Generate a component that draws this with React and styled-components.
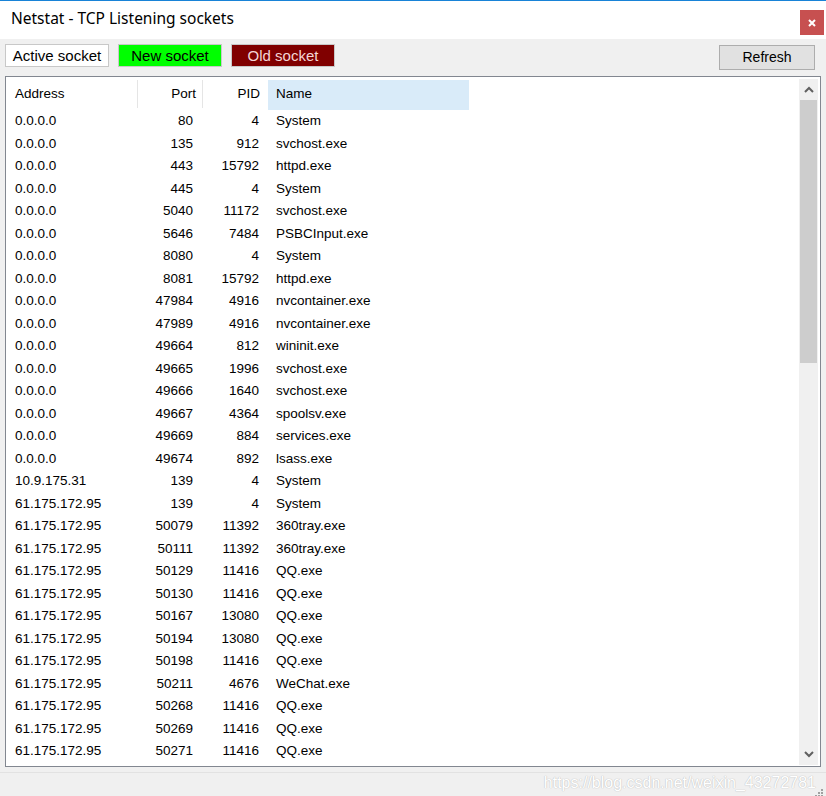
import React from "react";
import styled, { createGlobalStyle } from "styled-components";

const rows = [
  ["0.0.0.0", "80", "4", "System"],
  ["0.0.0.0", "135", "912", "svchost.exe"],
  ["0.0.0.0", "443", "15792", "httpd.exe"],
  ["0.0.0.0", "445", "4", "System"],
  ["0.0.0.0", "5040", "11172", "svchost.exe"],
  ["0.0.0.0", "5646", "7484", "PSBCInput.exe"],
  ["0.0.0.0", "8080", "4", "System"],
  ["0.0.0.0", "8081", "15792", "httpd.exe"],
  ["0.0.0.0", "47984", "4916", "nvcontainer.exe"],
  ["0.0.0.0", "47989", "4916", "nvcontainer.exe"],
  ["0.0.0.0", "49664", "812", "wininit.exe"],
  ["0.0.0.0", "49665", "1996", "svchost.exe"],
  ["0.0.0.0", "49666", "1640", "svchost.exe"],
  ["0.0.0.0", "49667", "4364", "spoolsv.exe"],
  ["0.0.0.0", "49669", "884", "services.exe"],
  ["0.0.0.0", "49674", "892", "lsass.exe"],
  ["10.9.175.31", "139", "4", "System"],
  ["61.175.172.95", "139", "4", "System"],
  ["61.175.172.95", "50079", "11392", "360tray.exe"],
  ["61.175.172.95", "50111", "11392", "360tray.exe"],
  ["61.175.172.95", "50129", "11416", "QQ.exe"],
  ["61.175.172.95", "50130", "11416", "QQ.exe"],
  ["61.175.172.95", "50167", "13080", "QQ.exe"],
  ["61.175.172.95", "50194", "13080", "QQ.exe"],
  ["61.175.172.95", "50198", "11416", "QQ.exe"],
  ["61.175.172.95", "50211", "4676", "WeChat.exe"],
  ["61.175.172.95", "50268", "11416", "QQ.exe"],
  ["61.175.172.95", "50269", "11416", "QQ.exe"],
  ["61.175.172.95", "50271", "11416", "QQ.exe"],
];

export default function App() {
  return (
    <>
      <GlobalStyle />
      <Window>
        <TitleBar>
          <Title>Netstat - TCP Listening sockets</Title>
          <CloseButton>
            <svg width="10" height="10" viewBox="0 0 10 10">
              <path d="M2 2 L8 8 M8 2 L2 8" stroke="#fff" strokeWidth="2" />
            </svg>
          </CloseButton>
        </TitleBar>

        <Toolbar>
          <Legend bg="#ffffff" color="#000">Active socket</Legend>
          <Legend bg="#00ff00" color="#000">New socket</Legend>
          <Legend bg="#800000" color="#f4d6d6">Old socket</Legend>
          <Spacer />
          <RefreshButton>Refresh</RefreshButton>
        </Toolbar>

        <ListFrame>
          <ListBody>
            <Header>
              <HeadCell sep>Address</HeadCell>
              <HeadCell sep right pr={7}>Port</HeadCell>
              <HeadCell right pr={8}>PID</HeadCell>
              <HeadCell active pl={8}>Name</HeadCell>
            </Header>
            {rows.map((r, i) => (
              <Row key={i}>
                <Cell>{r[0]}</Cell>
                <Cell right pr={10}>{r[1]}</Cell>
                <Cell right pr={9}>{r[2]}</Cell>
                <Cell pl={8}>{r[3]}</Cell>
              </Row>
            ))}
          </ListBody>
          <ScrollBar>
            <ArrowBox>
              <svg width="10" height="7" viewBox="0 0 10 7">
                <path d="M1 6 L5 2 L9 6" stroke="#606060" strokeWidth="2" fill="none" />
              </svg>
            </ArrowBox>
            <Thumb />
            <Track />
            <ArrowBox>
              <svg width="10" height="7" viewBox="0 0 10 7">
                <path d="M1 1 L5 5 L9 1" stroke="#606060" strokeWidth="2" fill="none" />
              </svg>
            </ArrowBox>
          </ScrollBar>
        </ListFrame>

        <StatusBar>
          <Watermark>https://blog.csdn.net/weixin_43272781</Watermark>
          <Grip>
            <svg width="10" height="10" viewBox="0 0 10 10">
              {[[8, 2], [5, 5], [8, 5], [2, 8], [5, 8], [8, 8]].map(([x, y], i) => (
                <rect key={i} x={x - 1} y={y - 1} width="2" height="2" fill="#a0a0a0" />
              ))}
            </svg>
          </Grip>
        </StatusBar>
      </Window>
    </>
  );
}

const GlobalStyle = createGlobalStyle`
  html, body { margin: 0; padding: 0; background: #f0f0f0; }
  * { box-sizing: border-box; }
`;

const Window = styled.div`
  width: 826px; height: 796px; display: flex; flex-direction: column;
  background: #f0f0f0; font-family: "Liberation Sans", Arial, sans-serif; overflow: hidden;
`;

const TitleBar = styled.div`
  height: 39px; background: #fff; border-top: 1px solid #1883d7;
  display: flex; align-items: flex-start; justify-content: space-between;
`;

const Title = styled.div`
  font-family: "Noto Sans", "Open Sans", sans-serif; font-size: 15.5px; color: #000;
  padding: 8px 0 0 11px; line-height: 19px;
`;

const CloseButton = styled.div`
  width: 24px; height: 25px; margin: 9px 2px 0 0; background: #c75050;
  display: flex; align-items: center; justify-content: center;
`;

const Toolbar = styled.div`
  height: 37px; display: flex; align-items: flex-start; padding: 5px 11px 0 5px; gap: 9px;
`;

const Legend = styled.div`
  width: 104px; height: 23px; background: ${(p) => p.bg}; color: ${(p) => p.color};
  border: 1px solid #c8c8c8; font-size: 15px; line-height: 21px; text-align: center;
`;

const Spacer = styled.div`flex: 1;`;

const RefreshButton = styled.div`
  width: 96px; height: 25px; margin-top: 1px; background: #e1e1e1; border: 1px solid #adadad;
  font-size: 14px; line-height: 23px; text-align: center; color: #000;
`;

const ListFrame = styled.div`
  height: 691px; margin: 0 5px; background: #fff; border: 1px solid #828790;
  display: flex; padding: 2px 2px 1px 0;
`;

const ListBody = styled.div`
  flex: 1; overflow: hidden; padding-top: 1px;
`;

const Header = styled.div`
  display: grid; grid-template-columns: 132px 65px 65px 201px; height: 30px;
`;

const HeadCell = styled.div`
  font-size: 13.5px; line-height: 28px; color: #000;
  text-align: ${(p) => (p.right ? "right" : "left")};
  padding-left: ${(p) => (p.pl != null ? p.pl : 9)}px;
  padding-right: ${(p) => p.pr || 0}px;
  background: ${(p) => (p.active ? "#d9ebf9" : "#fff")};
  position: relative;
  ${(p) => p.sep && `
    &::after { content: ""; position: absolute; right: 0; top: 0; bottom: 2px; width: 1px; background: #e5e5e5; }
  `}
`;

const Row = styled.div`
  display: grid; grid-template-columns: 132px 65px 65px 201px; height: 22.5px;
`;

const Cell = styled.div`
  font-size: 13.5px; line-height: 22.5px; color: #000; white-space: nowrap;
  text-align: ${(p) => (p.right ? "right" : "left")};
  padding-left: ${(p) => (p.pl != null ? p.pl : 9)}px;
  padding-right: ${(p) => p.pr || 0}px;
`;

const ScrollBar = styled.div`
  width: 19px; background: #f0f0f0; display: flex; flex-direction: column;
`;

const ArrowBox = styled.div`
  height: 21px; display: flex; align-items: center; justify-content: center;
`;

const Thumb = styled.div`
  height: 263px; margin: 0 1px; background: #cdcdcd;
`;

const Track = styled.div`flex: 1;`;

const StatusBar = styled.div`
  flex: 1; margin-top: 5px; border-top: 1px solid #e2e2e2; position: relative;
  display: flex; justify-content: flex-end; align-items: flex-start;
`;

const Watermark = styled.div`
  font-size: 16px; color: #fff; padding: 0 10px 0 0; line-height: 20px;
  text-shadow: 0 0 1px #c0c0c0, 0 0 1px #c0c0c0;
`;

const Grip = styled.div`
  position: absolute; right: 2px; bottom: 2px; width: 10px; height: 10px;
`;
